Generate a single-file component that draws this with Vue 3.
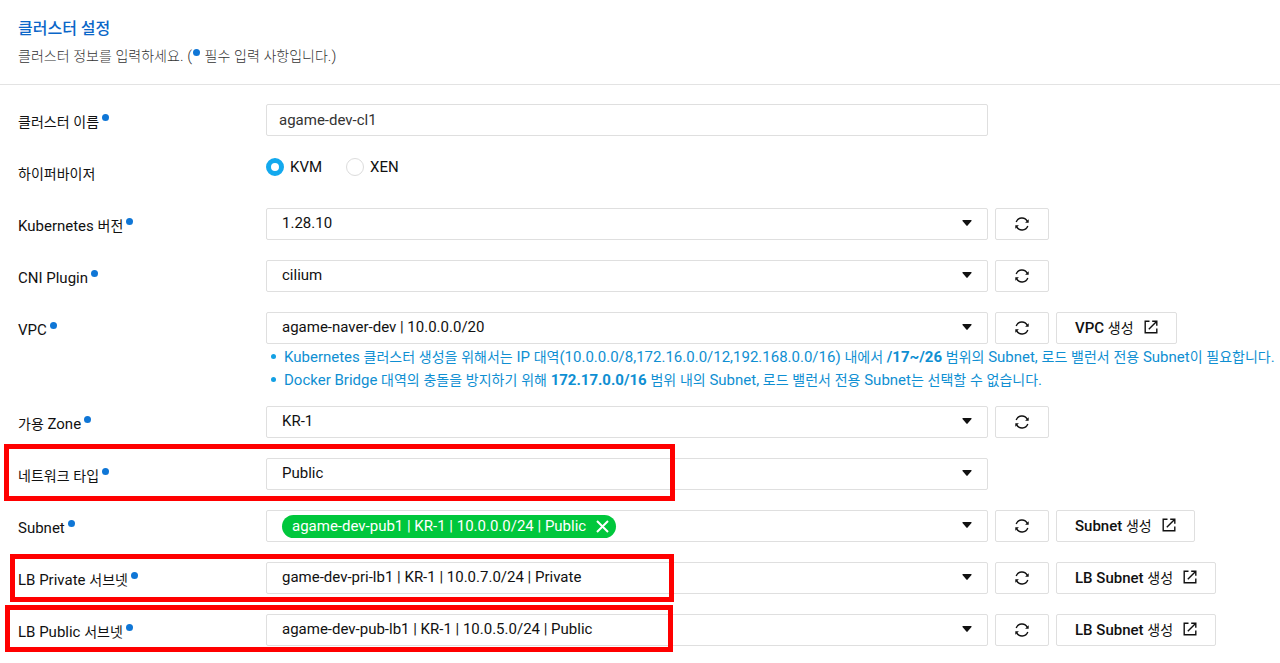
<script setup>
import { h, ref } from 'vue'

// Hangul runs are set one step smaller than the Latin text around them.
const Mixed = ({ text }) =>
  text
    .split(/([\uac00-\ud7a3]+)/)
    .filter(Boolean)
    .map((run) => (/[\uac00-\ud7a3]/.test(run) ? h('span', { class: 'hangul' }, run) : run))
Mixed.props = ['text']

const clusterName = ref('agame-dev-cl1')
const hypervisor = ref('KVM')

const rows = ref([
  { id: 'version', label: 'Kubernetes 버전', value: '1.28.10', refresh: true },
  { id: 'cni', label: 'CNI Plugin', value: 'cilium', refresh: true },
  { id: 'vpc', label: 'VPC', value: 'agame-naver-dev | 10.0.0.0/20', refresh: true, create: 'VPC 생성', notes: true },
  { id: 'zone', label: '가용 Zone', value: 'KR-1', refresh: true },
  { id: 'network', label: '네트워크 타입', value: 'Public', mark: 'mark-network' },
  { id: 'subnet', label: 'Subnet', chip: 'agame-dev-pub1 | KR-1 | 10.0.0.0/24 | Public', refresh: true, create: 'Subnet 생성' },
  { id: 'lb-private', label: 'LB Private 서브넷', value: 'game-dev-pri-lb1 | KR-1 | 10.0.7.0/24 | Private', refresh: true, create: 'LB Subnet 생성', mark: 'mark-private' },
  { id: 'lb-public', label: 'LB Public 서브넷', value: 'agame-dev-pub-lb1 | KR-1 | 10.0.5.0/24 | Public', refresh: true, create: 'LB Subnet 생성', mark: 'mark-public' },
])

const notes = [
  ['Kubernetes 클러스터 생성을 위해서는 IP 대역(10.0.0.0/8,172.16.0.0/12,192.168.0.0/16) 내에서 ', '/17~/26', ' 범위의 Subnet, 로드 밸런서 전용 Subnet이 필요합니다.'],
  ['Docker Bridge 대역의 충돌을 방지하기 위해 ', '172.17.0.0/16', ' 범위 내의 Subnet, 로드 밸런서 전용 Subnet는 선택할 수 없습니다.'],
]
</script>

<template>
  <main class="page">
    <header class="head">
      <h1>클러스터 설정</h1>
      <p><Mixed text="클러스터 정보를 입력하세요. (" /><i class="dot"></i><Mixed text=" 필수 입력 사항입니다.)" /></p>
    </header>

    <form class="form" @submit.prevent>
      <div class="row">
        <label class="label" for="name"><Mixed text="클러스터 이름" /><i class="dot"></i></label>
        <input id="name" v-model="clusterName" class="box text" type="text" />
      </div>

      <div class="row" role="radiogroup" aria-labelledby="hypervisor">
        <span id="hypervisor" class="label"><Mixed text="하이퍼바이저" /></span>
        <div class="radios">
          <label v-for="kind in ['KVM', 'XEN']" :key="kind" class="radio">
            <input v-model="hypervisor" type="radio" name="hypervisor" :value="kind" />{{ kind }}
          </label>
        </div>
      </div>

      <div v-for="row in rows" :key="row.id" class="row" :class="{ noted: row.notes }">
        <label class="label" :for="row.id"><Mixed :text="row.label" /><i class="dot"></i></label>
        <div class="field">
          <div v-if="row.chip" class="box multi">
            <span class="chip">
              {{ row.chip }}
              <button class="remove" type="button" aria-label="삭제">
                <svg width="13" height="13" viewBox="0 0 13 13"><path d="M1 1l11 11M12 1L1 12" fill="none" stroke="#fff" stroke-width="2" /></svg>
              </button>
            </span>
            <button :id="row.id" class="open" type="button" aria-label="Subnet"></button>
          </div>
          <select v-else :id="row.id" v-model="row.value" class="box select">
            <option :value="row.value">{{ row.value }}</option>
          </select>
          <svg class="arrow" width="10" height="6" viewBox="0 0 10 6"><path d="M1 0h8q1 0 .5 1L5.6 5.6q-.6.6-1.2 0L.5 1Q0 0 1 0z" fill="#111" /></svg>
        </div>
        <button v-if="row.refresh" class="box refresh" type="button" aria-label="새로고침">
          <svg width="14" height="14" viewBox="0 0 14 14" fill="none" stroke="#111" stroke-width="1.4">
            <path d="M1.2 5A6.1 6.1 0 0 1 12.4 4.4M12.8 9A6.1 6.1 0 0 1 1.6 9.6" />
            <path d="M13.7 2.2v3.6h-3.6zM.3 11.8V8.2h3.6z" fill="#111" stroke="none" />
          </svg>
        </button>
        <button v-if="row.create" class="box create" type="button">
          <span><Mixed :text="row.create" /></span>
          <svg width="14" height="14" viewBox="0 0 14 14" fill="none" stroke="#111" stroke-width="1.4">
            <path d="M5.5 1.2H1.2v11.6h11.6V8.5M8.2 1.2h4.6v4.6M12.8 1.2L4.8 9.2" />
          </svg>
        </button>
        <ul v-if="row.notes" class="notes">
          <li v-for="note in notes" :key="note[1]"><Mixed :text="note[0]" /><b>{{ note[1] }}</b><Mixed :text="note[2]" /></li>
        </ul>
        <span v-if="row.mark" class="mark" :class="row.mark"></span>
      </div>
    </form>
  </main>
</template>

<style>
body {
  margin: 0;
  background: #fff;
}
.hangul {
  font-size: 14px;
}
.create .hangul {
  font-weight: 400;
}
</style>

<style scoped>
.page,
.page input,
.page select,
.page button {
  font-family: Roboto, "Noto Sans CJK KR", sans-serif;
  font-size: 15px;
  color: #111;
}
.page *,
.page {
  box-sizing: border-box;
}
.head {
  padding: 17px 18px 16px;
  border-bottom: 1px solid #e3e3e3;
}
h1 {
  margin: 0;
  font-size: 16px;
  line-height: 24px;
  font-weight: 500;
  color: #0a66c8;
}
p {
  margin: 4px 0 0;
  line-height: 23px;
  font-weight: 300;
  color: #333;
}
.dot {
  display: inline-block;
  width: 7px;
  height: 7px;
  border-radius: 50%;
  background: #0f76d6;
  vertical-align: 5px;
}
p .dot {
  margin: 0 1px 0 1px;
}
.label .dot {
  margin-left: 3px;
  vertical-align: 6px;
}
.form {
  padding: 19px 18px 0;
}
.row {
  position: relative;
  display: grid;
  grid-template-columns: 241px minmax(0, 722px) auto auto;
  column-gap: 7px;
  justify-content: start;
  min-height: 32px;
  margin-bottom: 20px;
}
.row.noted {
  margin-bottom: 14px;
}
.label {
  padding-top: 4px;
  height: 32px;
  line-height: 28px;
  white-space: nowrap;
}
.box {
  height: 32px;
  margin: 0;
  border: 1px solid #dfdfdf;
  border-radius: 2px;
  background: #fff;
}
.text {
  width: 100%;
  padding: 0 12px;
}
.page .text {
  color: #333;
}
.field {
  position: relative;
}
.select {
  display: block;
  width: 100%;
  padding: 0 30px 2px 15px;
  appearance: none;
}
.arrow {
  position: absolute;
  top: 12px;
  right: 16px;
  pointer-events: none;
}
.multi {
  display: flex;
  align-items: center;
  padding-left: 15px;
}
.chip {
  display: flex;
  align-items: center;
  gap: 10px;
  height: 23px;
  padding: 0 7px 0 10px;
  border-radius: 12px;
  background: #00c73c;
  color: #fff;
  white-space: nowrap;
}
.remove {
  display: flex;
  padding: 0;
  border: 0;
  background: none;
}
.open {
  flex: 1;
  height: 100%;
  border: 0;
  background: none;
}
.refresh {
  display: flex;
  align-items: center;
  justify-content: center;
  width: 54px;
  padding: 0;
}
.create {
  display: flex;
  align-items: center;
  gap: 10px;
  padding: 0 18px 2px;
  font-weight: 500;
  white-space: nowrap;
}
.radios {
  display: flex;
  align-items: center;
  gap: 24px;
  height: 22px;
}
.radio {
  display: flex;
  align-items: center;
  gap: 6px;
}
.radio input {
  width: 18px;
  height: 18px;
  margin: 0;
  border: 1px solid #dcdcdc;
  border-radius: 50%;
  background: #fff;
  appearance: none;
}
.radio input:checked {
  border: 5px solid #13a9ee;
}
.notes {
  grid-column: 2 / -1;
  width: 0;
  margin: 2px 0 0;
  padding: 0;
  list-style: none;
  line-height: 23px;
  white-space: nowrap;
  color: #0f8fd2;
}
.notes li {
  height: 23px;
}
.notes li::before {
  content: "";
  display: inline-block;
  width: 5px;
  height: 5px;
  margin: 0 8px 0 5px;
  border-radius: 50%;
  background: #13a0e4;
  vertical-align: 3px;
}
.notes b {
  font-weight: 700;
}
.mark {
  position: absolute;
  border: 5px solid #f00;
  pointer-events: none;
}
.mark-network {
  top: -14px;
  left: -14px;
  width: 671px;
  height: 57px;
}
.mark-private {
  top: -8px;
  left: -8px;
  width: 664px;
  height: 48px;
}
.mark-public {
  top: -9px;
  left: -13px;
  width: 668px;
  height: 47px;
}
</style>
